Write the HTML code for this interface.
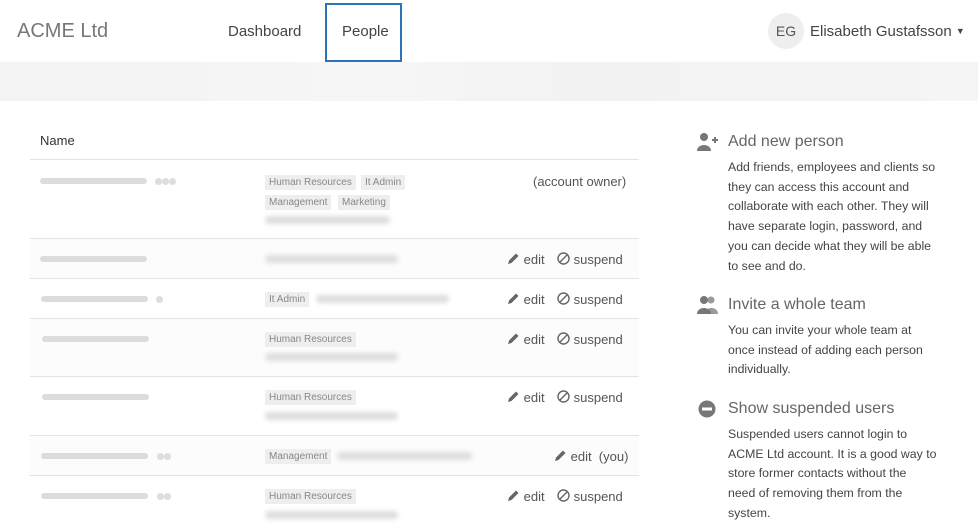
<!DOCTYPE html>
<html><head><meta charset="utf-8"><style>
*{margin:0;padding:0;box-sizing:border-box}
body{width:978px;height:531px;overflow:hidden;background:#fff;font-family:"Liberation Sans",sans-serif;color:#444;position:relative}
.a{position:absolute;white-space:nowrap}
.band{position:absolute;left:0;top:62px;width:978px;height:39px;background:linear-gradient(90deg,#f3f3f3,#f6f6f6 40%,#f2f2f2 60%,#f5f5f5)}
.row{position:absolute;left:30px;width:609px;border-top:1px solid #e3e3e3}
.alt{background:#fcfcfc}
.bar{position:absolute;height:6px;border-radius:3px;background:#dcdcdc}
.dot{position:absolute;width:7px;height:7px;border-radius:50%;background:#ddd}
.tag{position:absolute;font-size:10px;color:#888;background:#eee;padding:1px 4px;line-height:13px;white-space:nowrap}
.em{position:absolute;height:8px;border-radius:4px;background:#ddd;filter:blur(2.5px)}
.act{position:absolute;font-size:13px;color:#555;white-space:nowrap}
.h{position:absolute;left:728px;font-size:16px;color:#666;white-space:nowrap}
.p{position:absolute;left:728px;font-size:12.3px;line-height:19.7px;color:#444;white-space:nowrap}
</style></head><body>
<div class="a" style="left:17px;top:20px;font-size:20px;color:#777">ACME Ltd</div>
<div class="a" style="left:228px;top:23px;font-size:15px;color:#444">Dashboard</div>
<div class="a" style="left:325px;top:3px;width:77px;height:59px;border:2px solid #2d73b9"></div>
<div class="a" style="left:342px;top:23px;font-size:15px;color:#444">People</div>
<div class="a" style="left:768px;top:13px;width:36px;height:36px;border-radius:50%;background:#eee;font-size:14px;color:#555;text-align:center;line-height:36px">EG</div>
<div class="a" style="left:810px;top:23px;font-size:15px;color:#444">Elisabeth Gustafsson <span style="font-size:9px;position:relative;top:-2px">▼</span></div>
<div class="band"></div>

<div class="a" style="left:40px;top:133px;font-size:13px;color:#333">Name</div>

<div class="row" style="top:159px;height:80px"></div>
<div class="row alt" style="top:238px;height:41px"></div>
<div class="row" style="top:278px;height:41px"></div>
<div class="row alt" style="top:318px;height:59px"></div>
<div class="row" style="top:376px;height:60px"></div>
<div class="row alt" style="top:435px;height:41px"></div>
<div class="row" style="top:475px;height:56px"></div>

<div class="bar" style="left:40px;top:178px;width:107px"></div>
<div class="dot" style="left:155px;top:178px"></div><div class="dot" style="left:162px;top:178px"></div><div class="dot" style="left:169px;top:178px"></div>
<div class="tag" style="left:265px;top:175px">Human Resources</div>
<div class="tag" style="left:361px;top:175px">It Admin</div>
<div class="tag" style="left:265px;top:195px">Management</div>
<div class="tag" style="left:338px;top:195px">Marketing</div>
<div class="em" style="left:265px;top:216px;width:125px"></div>
<div class="act" style="left:533px;top:174px">(account owner)</div>

<div class="bar" style="left:40px;top:256px;width:107px"></div>
<div class="em" style="left:265px;top:255px;width:133px"></div>

<div class="bar" style="left:41px;top:296px;width:107px"></div>
<div class="dot" style="left:156px;top:296px"></div>
<div class="tag" style="left:265px;top:292px">It Admin</div>
<div class="em" style="left:316px;top:295px;width:133px"></div>

<div class="bar" style="left:42px;top:336px;width:107px"></div>
<div class="tag" style="left:265px;top:332px">Human Resources</div>
<div class="em" style="left:265px;top:353px;width:133px"></div>

<div class="bar" style="left:42px;top:394px;width:107px"></div>
<div class="tag" style="left:265px;top:390px">Human Resources</div>
<div class="em" style="left:265px;top:412px;width:133px"></div>

<div class="bar" style="left:41px;top:453px;width:107px"></div>
<div class="dot" style="left:157px;top:453px"></div><div class="dot" style="left:164px;top:453px"></div>
<div class="tag" style="left:265px;top:449px">Management</div>
<div class="em" style="left:337px;top:452px;width:135px"></div>

<div class="bar" style="left:41px;top:493px;width:107px"></div>
<div class="dot" style="left:157px;top:493px"></div><div class="dot" style="left:164px;top:493px"></div>
<div class="tag" style="left:265px;top:489px">Human Resources</div>
<div class="em" style="left:265px;top:511px;width:133px"></div>

<svg width="0" height="0" style="position:absolute"><defs>
<g id="pen"><path d="M1 12 L2 8.5 L9 1.5 L11.5 4 L4.5 11 Z" fill="#666"/></g>
<g id="no"><circle cx="6.5" cy="6.5" r="5.5" fill="none" stroke="#666" stroke-width="1.4"/><path d="M3 10 L10 3" stroke="#666" stroke-width="1.4"/></g>
</defs></svg>

<div class="act" style="left:507px;top:252px"><svg width="13" height="13" style="vertical-align:-1px"><use href="#pen"/></svg> edit</div>
<div class="act" style="left:557px;top:252px"><svg width="13" height="13" style="vertical-align:-1px"><use href="#no"/></svg> suspend</div>
<div class="act" style="left:507px;top:292px"><svg width="13" height="13" style="vertical-align:-1px"><use href="#pen"/></svg> edit</div>
<div class="act" style="left:557px;top:292px"><svg width="13" height="13" style="vertical-align:-1px"><use href="#no"/></svg> suspend</div>
<div class="act" style="left:507px;top:332px"><svg width="13" height="13" style="vertical-align:-1px"><use href="#pen"/></svg> edit</div>
<div class="act" style="left:557px;top:332px"><svg width="13" height="13" style="vertical-align:-1px"><use href="#no"/></svg> suspend</div>
<div class="act" style="left:507px;top:390px"><svg width="13" height="13" style="vertical-align:-1px"><use href="#pen"/></svg> edit</div>
<div class="act" style="left:557px;top:390px"><svg width="13" height="13" style="vertical-align:-1px"><use href="#no"/></svg> suspend</div>
<div class="act" style="left:554px;top:449px"><svg width="13" height="13" style="vertical-align:-1px"><use href="#pen"/></svg> edit &nbsp;(you)</div>
<div class="act" style="left:507px;top:489px"><svg width="13" height="13" style="vertical-align:-1px"><use href="#pen"/></svg> edit</div>
<div class="act" style="left:557px;top:489px"><svg width="13" height="13" style="vertical-align:-1px"><use href="#no"/></svg> suspend</div>

<svg class="a" style="left:697px;top:132px" width="22" height="20" viewBox="0 0 22 20"><circle cx="7" cy="5" r="4" fill="#777"/><path d="M0 19 C0 11 14 11 14 19 Z" fill="#777"/><path d="M15 8 h6 M18 5 v6" stroke="#777" stroke-width="2"/></svg>
<div class="h" style="left:728px;top:133px">Add new person</div>
<div class="p" style="top:158px">Add friends, employees and clients so<br>they can access this account and<br>collaborate with each other. They will<br>have separate login, password, and<br>you can decide what they will be able<br>to see and do.</div>

<svg class="a" style="left:697px;top:295px" width="22" height="20" viewBox="0 0 22 20"><circle cx="14" cy="5" r="3.5" fill="#999"/><path d="M8 19 C8 11 21 11 21 19 Z" fill="#999"/><circle cx="7" cy="5" r="4" fill="#777"/><path d="M0 19 C0 11 14 11 14 19 Z" fill="#777"/></svg>
<div class="h" style="left:728px;top:296px">Invite a whole team</div>
<div class="p" style="top:321px">You can invite your whole team at<br>once instead of adding each person<br>individually.</div>

<svg class="a" style="left:698px;top:400px" width="18" height="18" viewBox="0 0 18 18"><circle cx="9" cy="9" r="8.5" fill="#777"/><rect x="4" y="7.5" width="10" height="3" fill="#fff"/></svg>
<div class="h" style="left:728px;top:400px">Show suspended users</div>
<div class="p" style="top:425px">Suspended users cannot login to<br>ACME Ltd account. It is a good way to<br>store former contacts without the<br>need of removing them from the<br>system.</div>
</body></html>
